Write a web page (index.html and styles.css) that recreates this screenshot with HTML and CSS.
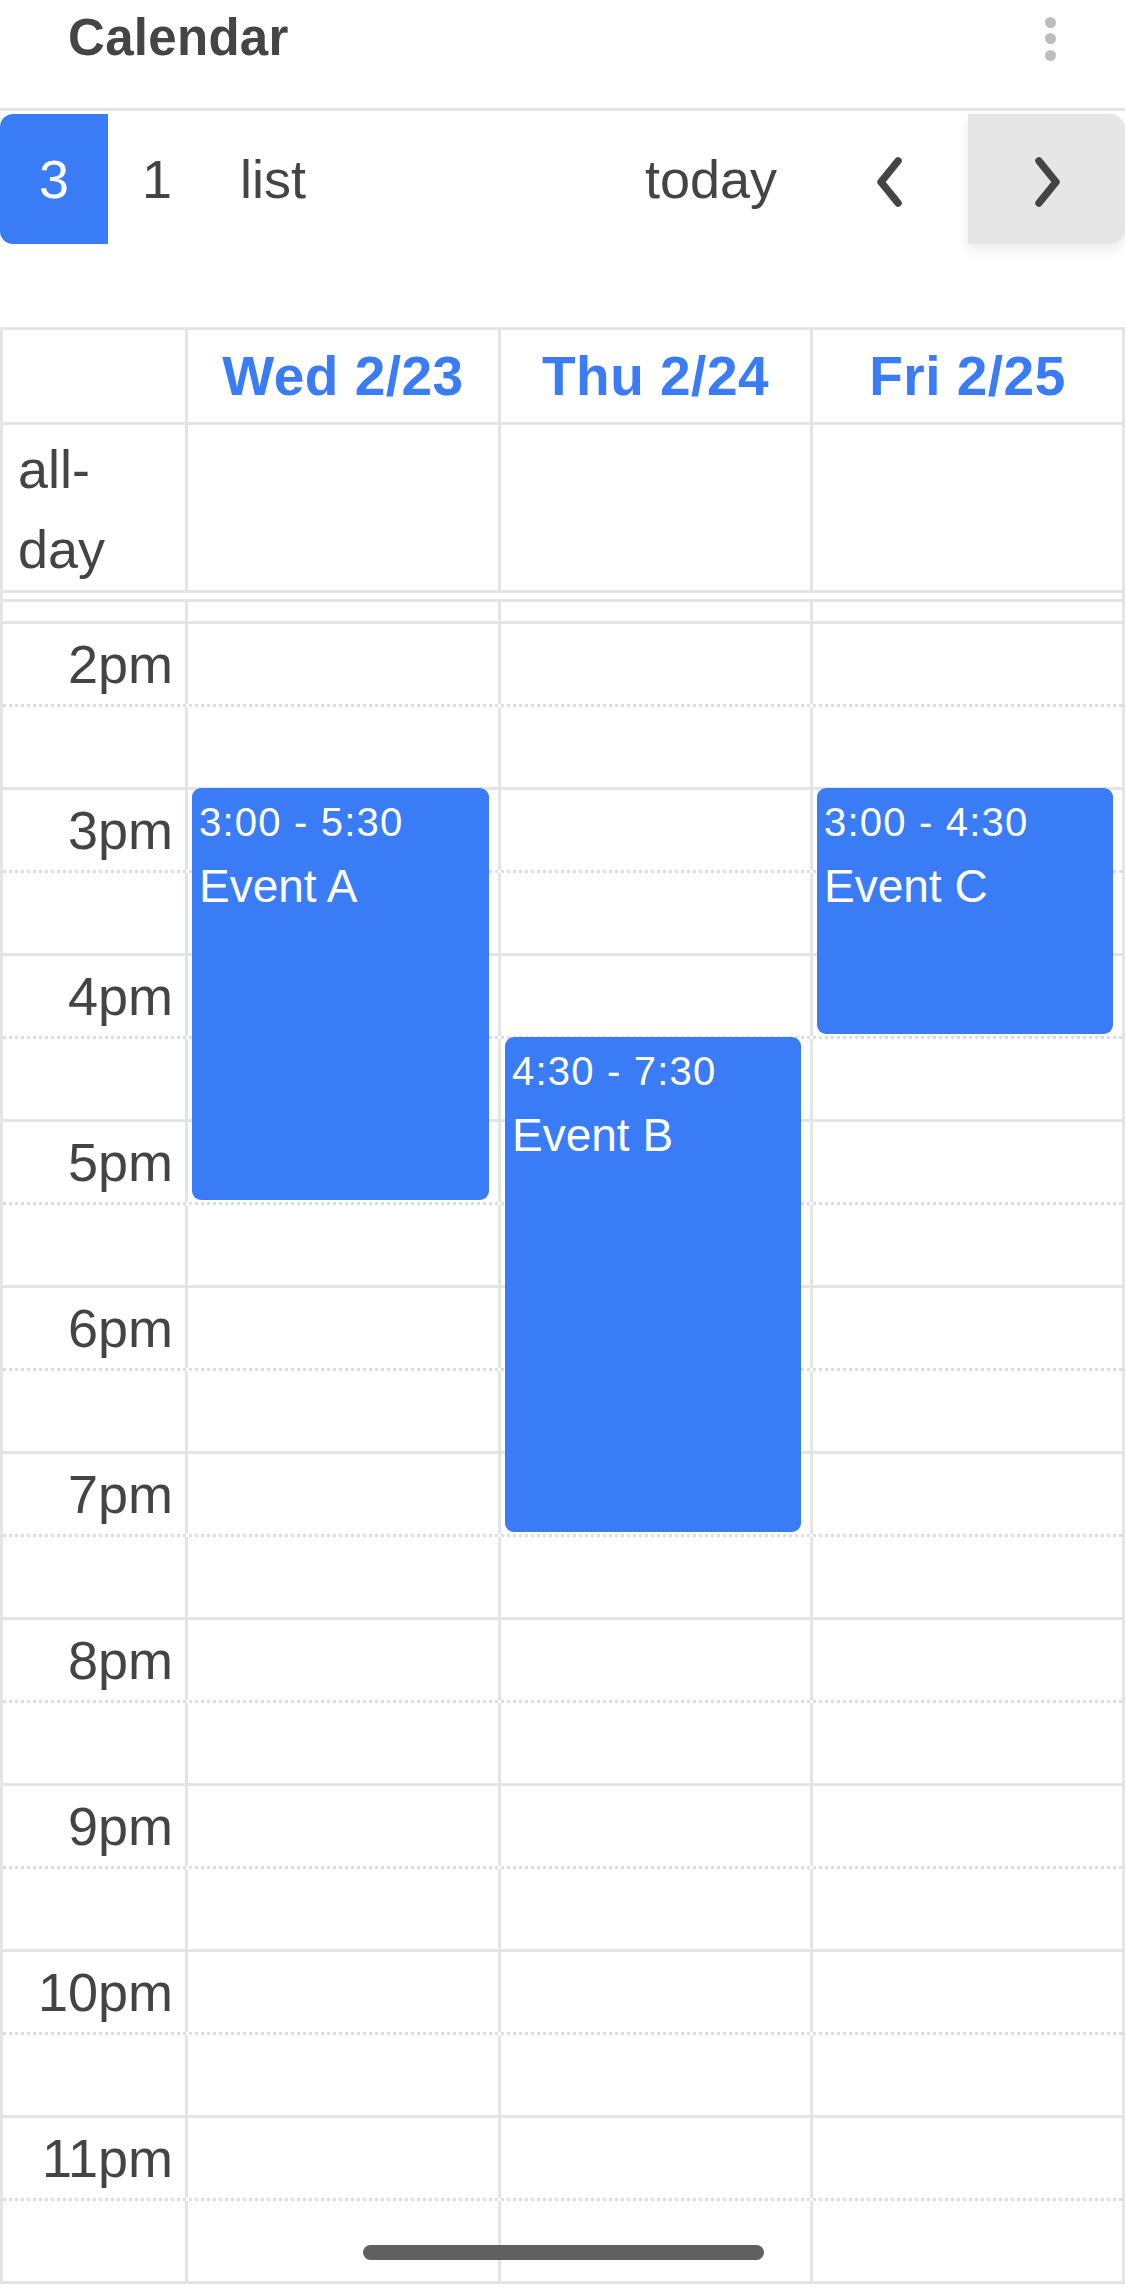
FILE: index.html
```html
<!DOCTYPE html>
<html lang="en">
<head>
<meta charset="utf-8">
<title>Calendar</title>
<link rel="stylesheet" href="styles.css">
</head>
<body>
  <header class="appbar">
    <h1 class="appbar-title">Calendar</h1>
    <button class="kebab" aria-label="More options">
      <span class="kebab-dot"></span>
      <span class="kebab-dot"></span>
      <span class="kebab-dot"></span>
    </button>
  </header>

  <nav class="toolbar">
    <div class="btn-group">
      <button class="btn btn-active">3</button>
      <button class="btn">1</button>
      <button class="btn">list</button>
    </div>
    <div class="btn-group">
      <button class="btn">today</button>
      <button class="btn btn-icon" aria-label="Previous">
        <svg width="34" height="56" viewBox="0 0 34 56"><polyline points="25,7 8,28 25,49" /></svg>
      </button>
      <button class="btn btn-icon btn-pressed" aria-label="Next">
        <svg width="34" height="56" viewBox="0 0 34 56"><polyline points="9,7 26,28 9,49" /></svg>
      </button>
    </div>
  </nav>

  <section class="cal">
    <div class="row head-row">
      <div class="cell"></div>
      <div class="cell day-head">Wed 2/23</div>
      <div class="cell day-head">Thu 2/24</div>
      <div class="cell day-head">Fri 2/25</div>
    </div>
    <div class="row allday-row">
      <div class="cell allday-label"><span class="allday-text">all-day</span></div>
      <div class="cell"></div>
      <div class="cell"></div>
      <div class="cell"></div>
    </div>
    <div class="divider"></div>

    <div class="timegrid">
      <div class="row slot-partial"><div class="cell"></div><div class="cell"></div><div class="cell"></div><div class="cell"></div></div>

      <div class="row slot"><div class="cell axis">2pm</div><div class="cell"></div><div class="cell"></div><div class="cell"></div></div>
      <div class="row slot slot-half"><div class="cell"></div><div class="cell"></div><div class="cell"></div><div class="cell"></div></div>
      <div class="row slot"><div class="cell axis">3pm</div><div class="cell"></div><div class="cell"></div><div class="cell"></div></div>
      <div class="row slot slot-half"><div class="cell"></div><div class="cell"></div><div class="cell"></div><div class="cell"></div></div>
      <div class="row slot"><div class="cell axis">4pm</div><div class="cell"></div><div class="cell"></div><div class="cell"></div></div>
      <div class="row slot slot-half"><div class="cell"></div><div class="cell"></div><div class="cell"></div><div class="cell"></div></div>
      <div class="row slot"><div class="cell axis">5pm</div><div class="cell"></div><div class="cell"></div><div class="cell"></div></div>
      <div class="row slot slot-half"><div class="cell"></div><div class="cell"></div><div class="cell"></div><div class="cell"></div></div>
      <div class="row slot"><div class="cell axis">6pm</div><div class="cell"></div><div class="cell"></div><div class="cell"></div></div>
      <div class="row slot slot-half"><div class="cell"></div><div class="cell"></div><div class="cell"></div><div class="cell"></div></div>
      <div class="row slot"><div class="cell axis">7pm</div><div class="cell"></div><div class="cell"></div><div class="cell"></div></div>
      <div class="row slot slot-half"><div class="cell"></div><div class="cell"></div><div class="cell"></div><div class="cell"></div></div>
      <div class="row slot"><div class="cell axis">8pm</div><div class="cell"></div><div class="cell"></div><div class="cell"></div></div>
      <div class="row slot slot-half"><div class="cell"></div><div class="cell"></div><div class="cell"></div><div class="cell"></div></div>
      <div class="row slot"><div class="cell axis">9pm</div><div class="cell"></div><div class="cell"></div><div class="cell"></div></div>
      <div class="row slot slot-half"><div class="cell"></div><div class="cell"></div><div class="cell"></div><div class="cell"></div></div>
      <div class="row slot"><div class="cell axis">10pm</div><div class="cell"></div><div class="cell"></div><div class="cell"></div></div>
      <div class="row slot slot-half"><div class="cell"></div><div class="cell"></div><div class="cell"></div><div class="cell"></div></div>
      <div class="row slot"><div class="cell axis">11pm</div><div class="cell"></div><div class="cell"></div><div class="cell"></div></div>
      <div class="row slot slot-half"><div class="cell"></div><div class="cell"></div><div class="cell"></div><div class="cell"></div></div>

      <div class="events">
        <div class="ev-col"></div>
        <div class="ev-col">
          <div class="event" style="top:186px;height:412px">
            <div class="ev-time">3:00 - 5:30</div>
            <div class="ev-title">Event A</div>
          </div>
        </div>
        <div class="ev-col">
          <div class="event" style="top:435px;height:495px">
            <div class="ev-time">4:30 - 7:30</div>
            <div class="ev-title">Event B</div>
          </div>
        </div>
        <div class="ev-col">
          <div class="event" style="top:186px;height:246px">
            <div class="ev-time">3:00 - 4:30</div>
            <div class="ev-title">Event C</div>
          </div>
        </div>
      </div>
    </div>
  </section>

  <div class="home-indicator"></div>
</body>
</html>
```

FILE: styles.css
```css
* {
  box-sizing: border-box;
  margin: 0;
  padding: 0;
}

html,
body {
  width: 1125px;
  height: 2286px;
  overflow: hidden;
  background: #fff;
}

body {
  position: relative;
  font-family: "Liberation Sans", Arial, sans-serif;
  color: #444;
}

/* ---------- app bar ---------- */
.appbar {
  height: 111px;
  border-bottom: 3px solid #e6e6e6;
  display: flex;
  align-items: flex-start;
  justify-content: space-between;
  padding: 8px 0 0 68px;
}

.appbar-title {
  font-size: 51px;
  font-weight: 700;
  line-height: 60px;
  letter-spacing: 0.3px;
  color: #454545;
}

.kebab {
  display: flex;
  flex-direction: column;
  gap: 5.5px;
  margin: 8.5px 69px 0 0;
  background: none;
  border: 0;
}

.kebab-dot {
  width: 11px;
  height: 11px;
  border-radius: 50%;
  background: #bdbdbd;
}

/* ---------- toolbar ---------- */
.toolbar {
  display: flex;
  justify-content: space-between;
  padding-top: 3px;
  height: 133px;
  margin-bottom: 83px;
}

.btn-group {
  display: flex;
}

.btn {
  height: 130px;
  padding: 0 34px;
  border: 0;
  background: transparent;
  font-family: "Liberation Sans", Arial, sans-serif;
  font-size: 54px;
  line-height: 130px;
  color: #444;
}

.btn-active {
  padding: 0 39px;
  background: #3a7cf5;
  color: #fff;
  border-radius: 13px 0 0 13px;
}

.btn-icon {
  width: 157px;
  padding: 0;
  display: flex;
  align-items: center;
  justify-content: center;
}

.btn-icon svg {
  margin-top: 6px;
}

.btn-icon:first-of-type svg {
  margin-left: 4px;
}

.btn-icon polyline {
  fill: none;
  stroke: #444;
  stroke-width: 7.5;
  stroke-linecap: round;
  stroke-linejoin: round;
}

.btn-pressed {
  background: #e6e6e6;
  border-radius: 0 15px 15px 0;
  box-shadow: 0 6px 14px rgba(0, 0, 0, 0.08);
}

/* ---------- calendar grid ---------- */
.cal {
  border: 3px solid #e4e4e4;
}

.row {
  display: grid;
  grid-template-columns: 185px 313px 312px 1fr;
}

.cell {
  border-right: 3px solid #e4e4e4;
}

.cell:last-child {
  border-right: 0;
}

.head-row {
  height: 95px;
  border-bottom: 3px solid #e4e4e4;
}

.day-head {
  text-align: center;
  font-size: 55px;
  font-weight: 700;
  line-height: 92px;
  letter-spacing: 0.5px;
  color: #3a7cf5;
}

.allday-row {
  height: 168px;
  border-bottom: 3px solid #e4e4e4;
}

.allday-label {
  padding: 4px 12px 0 15px;
  font-size: 54px;
  line-height: 80px;
}

.allday-text {
  display: block;
  width: 2em;
}

.divider {
  height: 9px;
  border-bottom: 3px solid #e4e4e4;
}

.timegrid {
  position: relative;
}

.slot-partial {
  height: 19px;
}

.slot {
  height: 83px;
  border-top: 3px solid #e4e4e4;
}

.slot-half {
  border-top: 0;
  padding-top: 3px;
  background: repeating-linear-gradient(90deg, #dedede 0 3px, transparent 3px 6px) top left / 100% 3px no-repeat;
}

.axis {
  text-align: right;
  padding-right: 12px;
  font-size: 54px;
  line-height: 80px;
}

/* ---------- events ---------- */
.events {
  position: absolute;
  inset: 0;
  display: grid;
  grid-template-columns: 185px 313px 312px 1fr;
  pointer-events: none;
}

.ev-col {
  position: relative;
  border-right: 3px solid transparent;
}

.ev-col:last-child {
  border-right: 0;
}

.event {
  position: absolute;
  left: 4px;
  right: 9px;
  padding: 8px 6px 0 7px;
  background: #3a7cf5;
  border-radius: 9px;
  color: #fff;
  overflow: hidden;
}

.ev-time {
  font-size: 40px;
  line-height: 52px;
  letter-spacing: 1.2px;
  white-space: nowrap;
}

.ev-title {
  margin-top: 8px;
  font-size: 46px;
  line-height: 60px;
  white-space: nowrap;
}

/* ---------- home indicator ---------- */
.home-indicator {
  position: absolute;
  left: 363px;
  top: 2245px;
  width: 401px;
  height: 15px;
  border-radius: 8px;
  background: #606060;
}
```
